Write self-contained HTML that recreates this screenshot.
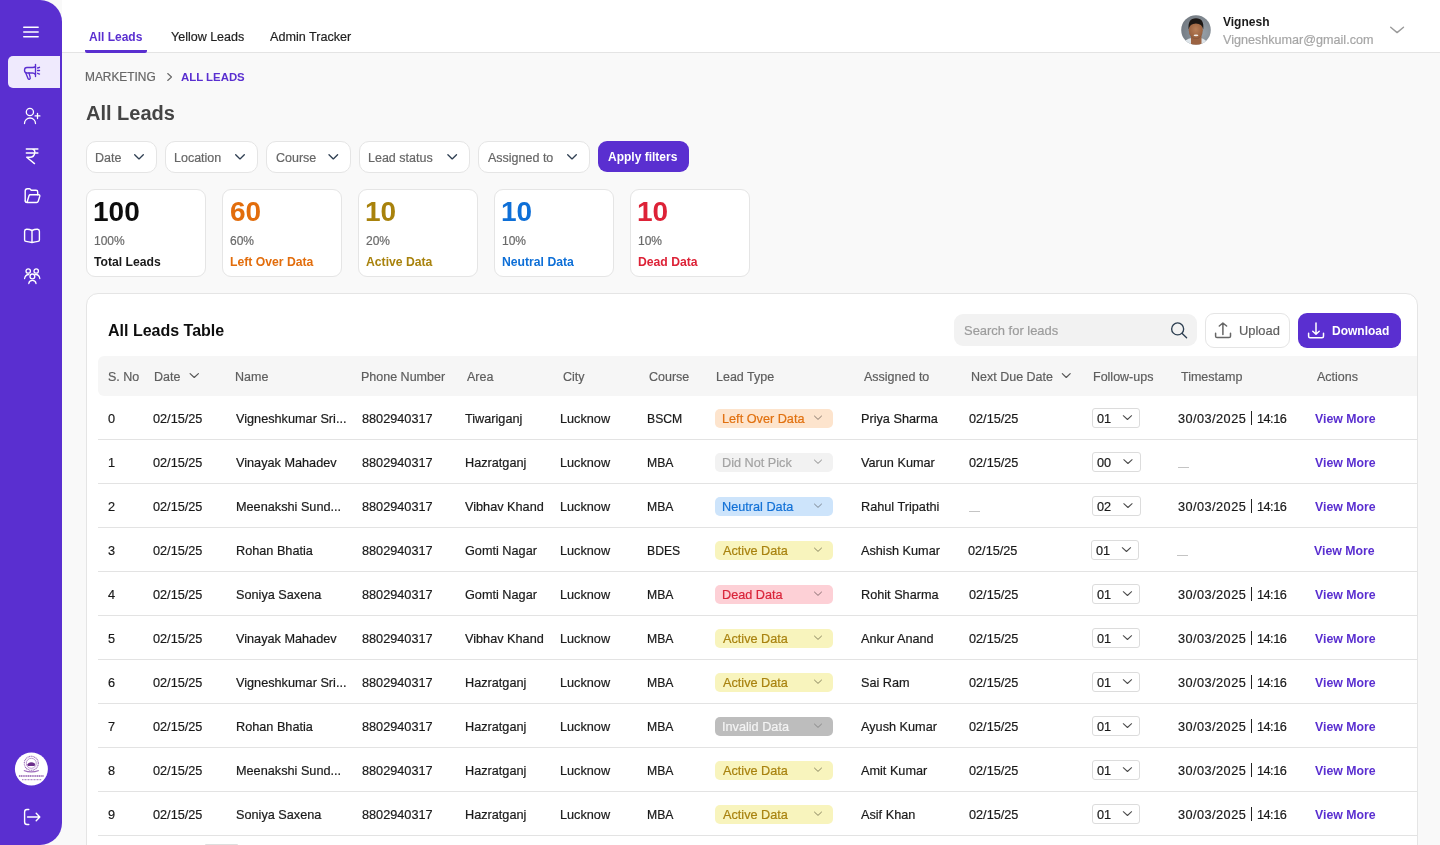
<!DOCTYPE html><html><head><meta charset="utf-8"><style>
*{box-sizing:border-box;margin:0;padding:0}
html,body{width:1440px;height:845px;overflow:hidden;background:#f9f9f9;font-family:"Liberation Sans",sans-serif;color:#1a1a1a}
div{position:absolute;white-space:nowrap;line-height:normal}
svg{position:absolute;overflow:visible}
.t{will-change:transform}
.r{-webkit-text-stroke:0.2px currentColor}
.sb{left:0;top:0;width:62px;height:845px;background:#5a2fd0;border-top-right-radius:22px;border-bottom-right-radius:22px}
.act{left:8px;top:56px;width:52px;height:32px;background:#efeafd;border-radius:5px 0 0 5px}
.hdr{left:62px;top:0;width:1378px;height:53px;background:#fff;border-bottom:1px solid #e4e4e4}
.box{background:#fff;border:1px solid #e5e5e5}
</style></head><body>
<div class="sb"></div><div class="act"></div>
<svg style="left:20px;top:20px" width="24" height="24" viewBox="0 0 24 24" fill="none" stroke="#fff" stroke-width="1.5" stroke-linecap="round" stroke-linejoin="round"><path d="M3.75 7.3H18.15M3.75 12H18.15M3.75 16.8H18.15"/></svg>
<svg style="left:20px;top:60px" width="24" height="24" viewBox="0 0 24 24" fill="none" stroke="#5a2fd0" stroke-width="1.35" stroke-linecap="round" stroke-linejoin="round"><path d="M15.5 4.5V16.5"/><path d="M15.5 6.5C14.5 7.5 13.5 7.5 12.5 7.5H7C5.5 7.5 4.5 8.7 4.5 10.2C4.5 11.7 5.5 13 7 13H12.5C13.5 13 14.5 13.3 15.5 14.5"/><path d="M5.6 12.6L8 18.6C8.3 19.4 9.3 19.5 9.8 19C10.3 18.6 10.4 18 10.2 17.4L9 13"/><path d="M17.6 8L19.5 7.3M17.6 10.5H19.5M17.6 13.3L19.5 14.1"/></svg>
<svg style="left:20px;top:104px" width="24" height="24" viewBox="0 0 24 24" fill="none" stroke="#fff" stroke-width="1.3" stroke-linecap="round" stroke-linejoin="round"><circle cx="9.9" cy="8" r="3.6"/><path d="M4.5 19.5A5.5 5.5 0 0 1 15.5 19.5"/><path d="M15.1 11.9H19.9M17.5 9.3V14.6"/></svg>
<svg style="left:20px;top:144px" width="24" height="24" viewBox="0 0 24 24" fill="none" stroke="#fff" stroke-width="1.4" stroke-linecap="round" stroke-linejoin="round"><path d="M6.3 5H17.9M6.3 9H17.9M12.3 5C14.5 5.5 15.2 7.5 14.8 9C14.3 11.5 12.5 13.3 10 13.3H6.7L14.5 19.6"/></svg>
<svg style="left:20px;top:184px" width="24" height="24" viewBox="0 0 24 24" fill="none" stroke="#fff" stroke-width="1.4" stroke-linecap="round" stroke-linejoin="round"><path d="M5.2 17V7Q5.2 4.8 7.4 4.8H9.3Q10 4.8 10.5 5.4L11.2 6.3H16Q17.7 6.3 17.7 8V10.8"/><path d="M7 18.5H16.6Q17.8 18.5 18.2 17.3L19.8 12.2Q20 10.8 18.8 10.8H10.2Q9.3 10.8 9 11.7L7 18.5Q5.2 18.5 5.2 17"/></svg>
<svg style="left:20px;top:224px" width="24" height="24" viewBox="0 0 24 24" fill="none" stroke="#fff" stroke-width="1.4" stroke-linecap="round" stroke-linejoin="round"><path d="M12 6.5V18.3"/><path d="M12 6.5C10 5.5 8 5.2 6.5 5.3Q4.6 5.5 4.6 7.3V16Q4.6 17.2 6 17.4C8.5 17.8 10.5 18.2 12 18.5C13.5 18.2 15.5 17.8 18 17.4Q19.4 17.2 19.4 16V7.3Q19.4 5.5 17.5 5.3C16 5.2 14 5.5 12 6.5Z"/></svg>
<svg style="left:20px;top:264px" width="24" height="24" viewBox="0 0 24 24" fill="none" stroke="#fff" stroke-width="1.3" stroke-linecap="round" stroke-linejoin="round"><circle cx="8.2" cy="7" r="2.2"/><circle cx="16.2" cy="7" r="2.2"/><circle cx="12.4" cy="12.4" r="2.4"/><path d="M4.6 14.5C5 12 6.5 10.6 8.8 10.5M15.6 10.5C18 10.6 19.5 12 19.8 14.5M8.8 19.5C9 17.6 10.5 16.4 12.4 16.4C14.3 16.4 15.8 17.6 16 19.5"/></svg>
<svg style="left:14px;top:752px" width="34" height="34" viewBox="0 0 34 34"><circle cx="17.4" cy="17" r="16.5" fill="#fff"/><circle cx="17.3" cy="11.3" r="7" fill="none" stroke="#9d6cbb" stroke-width="1.1" stroke-dasharray="1.1 0.6"/><circle cx="17.3" cy="11.3" r="5" fill="none" stroke="#b48fcb" stroke-width="0.9"/><path d="M13.2 12.5 Q16 8.6 21.2 11.8 L20.6 14 H13.8Z" fill="#6b2d8a"/><path d="M9.8 18.4 Q17.3 21.4 24.8 18.4" fill="none" stroke="#9d6cbb" stroke-width="1.1"/><path d="M4.9 24H30" stroke="#8f5aae" stroke-width="1.6" stroke-dasharray="1.3 0.5"/><path d="M8 27.6H27.7" stroke="#b08dc8" stroke-width="1.1" stroke-dasharray="1 0.5"/></svg>
<svg style="left:20px;top:805px" width="24" height="24" viewBox="0 0 24 24" fill="none" stroke="#fff" stroke-width="1.4" stroke-linecap="round" stroke-linejoin="round"><path d="M8.8 4.5H7Q4.6 4.5 4.6 7V17Q4.6 19.5 7 19.5H8.8M7.5 12H19.5M16.2 8.2L19.8 12L16.2 15.8"/></svg>
<div class="hdr"></div>
<div class="t" style="left:89.20px;top:30px;font-size:12px;color:#5a2fd0;font-weight:bold">All Leads</div>
<div style="left:85px;top:50px;width:62px;height:3px;background:#5a2fd0;border-radius:0 0 2px 2px"></div>
<div class="t r" style="left:171.43px;top:30px;font-size:12.5px;color:#1f1f1f">Yellow Leads</div>
<div class="t r" style="left:269.98px;top:30px;font-size:12.6px;color:#1f1f1f">Admin Tracker</div>
<svg style="left:1181px;top:15px" width="30" height="30" viewBox="0 0 30 30"><defs><clipPath id="cp"><circle cx="15" cy="15" r="14.8"/></clipPath><radialGradient id="bgg" cx="0.7" cy="0.6" r="0.8"><stop offset="0" stop-color="#97a0a8"/><stop offset="1" stop-color="#6f767e"/></radialGradient><radialGradient id="fg" cx="0.5" cy="0.45" r="0.6"><stop offset="0" stop-color="#b98058"/><stop offset="0.8" stop-color="#9a6240"/><stop offset="1" stop-color="#6e4530"/></radialGradient></defs><g clip-path="url(#cp)"><rect width="30" height="30" fill="url(#bgg)"/><path d="M1 30 Q4 24 10.5 23 H19.5 Q25 24 28 30Z" fill="#dce3e8"/><rect x="10" y="19" width="10.5" height="11" fill="#9b6342"/><ellipse cx="14.8" cy="15.2" rx="7" ry="8.8" fill="url(#fg)"/><path d="M7.6 14.5 Q6.5 3.2 15 3.2 Q23.5 3.2 22.2 14.5 Q21.2 8.8 14.9 8.6 Q8.6 8.8 7.6 14.5Z" fill="#1c1714"/><ellipse cx="15" cy="20.3" rx="2.4" ry="0.9" fill="#f2eeea"/></g></svg>
<div class="t" style="left:1223.22px;top:15px;font-size:12px;color:#1a1a1a;font-weight:bold">Vignesh</div>
<div class="t r" style="left:1223.24px;top:33px;font-size:12.6px;color:#a6a6a6">Vigneshkumar@gmail.com</div>
<svg style="left:1387px;top:24px" width="18" height="11" viewBox="0 0 18 11" fill="none" stroke="#9a9a9a" stroke-width="1.4" stroke-linecap="round" stroke-linejoin="round"><path d="M3.70 3.20L10.10 8.60L16.50 3.20"/></svg>
<div class="t r" style="left:85.42px;top:70px;font-size:11.9px;color:#666">MARKETING</div>
<svg style="left:167px;top:73px" width="6" height="8" viewBox="0 0 6 8" fill="none" stroke="#666" stroke-width="1.1" stroke-linecap="round" stroke-linejoin="round"><path d="M0.7 0.5L4.5 4L0.7 7.5"/></svg>
<div class="t" style="left:181.02px;top:71px;font-size:11.4px;color:#5a2fd0;font-weight:bold">ALL LEADS</div>
<div class="t" style="left:86.00px;top:102px;font-size:20px;color:#454545;font-weight:bold">All Leads</div>
<div class="box" style="left:86px;top:141px;width:71px;height:32px;border-radius:10px"></div>
<div class="t r" style="left:95.47px;top:151px;font-size:12.5px;color:#666">Date</div>
<svg style="left:131px;top:151px" width="14" height="10" viewBox="0 0 14 10" fill="none" stroke="#2f3f52" stroke-width="1.35" stroke-linecap="round" stroke-linejoin="round"><path d="M3.70 3.75L8.00 7.90L12.30 3.75"/></svg>
<div class="box" style="left:165px;top:141px;width:92.5px;height:32px;border-radius:10px"></div>
<div class="t r" style="left:174.27px;top:151px;font-size:12.5px;color:#666">Location</div>
<svg style="left:232px;top:151px" width="14" height="10" viewBox="0 0 14 10" fill="none" stroke="#2f3f52" stroke-width="1.35" stroke-linecap="round" stroke-linejoin="round"><path d="M3.70 3.75L8.00 7.90L12.30 3.75"/></svg>
<div class="box" style="left:266px;top:141px;width:85px;height:32px;border-radius:10px"></div>
<div class="t r" style="left:275.77px;top:151px;font-size:12.5px;color:#666">Course</div>
<svg style="left:326px;top:151px" width="14" height="10" viewBox="0 0 14 10" fill="none" stroke="#2f3f52" stroke-width="1.35" stroke-linecap="round" stroke-linejoin="round"><path d="M3.00 3.75L7.30 7.90L11.60 3.75"/></svg>
<div class="box" style="left:359px;top:141px;width:111px;height:32px;border-radius:10px"></div>
<div class="t r" style="left:368.37px;top:151px;font-size:12.5px;color:#666">Lead status</div>
<svg style="left:444px;top:151px" width="14" height="10" viewBox="0 0 14 10" fill="none" stroke="#2f3f52" stroke-width="1.35" stroke-linecap="round" stroke-linejoin="round"><path d="M3.90 3.75L8.20 7.90L12.50 3.75"/></svg>
<div class="box" style="left:478px;top:141px;width:111.5px;height:32px;border-radius:10px"></div>
<div class="t r" style="left:488.48px;top:151px;font-size:12.5px;color:#666">Assigned to</div>
<svg style="left:564px;top:151px" width="14" height="10" viewBox="0 0 14 10" fill="none" stroke="#2f3f52" stroke-width="1.35" stroke-linecap="round" stroke-linejoin="round"><path d="M3.70 3.75L8.00 7.90L12.30 3.75"/></svg>
<div style="left:598px;top:141px;width:91px;height:31px;background:#5a2fd0;border-radius:9px"></div>
<div class="t" style="left:608.10px;top:150px;font-size:12px;color:#fff;font-weight:bold">Apply filters</div>
<div class="box" style="left:86px;top:189px;width:120px;height:88px;border-radius:9px"></div>
<div class="t" style="left:92.84px;top:196px;font-size:28px;color:#0d0d0d;font-weight:bold">100</div>
<div class="t r" style="left:93.69px;top:234px;font-size:12px;color:#6a6a6a">100%</div>
<div class="t" style="left:94.36px;top:255px;font-size:12.2px;color:#1a1a1a;font-weight:bold">Total Leads</div>
<div class="box" style="left:222px;top:189px;width:120px;height:88px;border-radius:9px"></div>
<div class="t" style="left:229.57px;top:196px;font-size:28px;color:#e26d0c;font-weight:bold">60</div>
<div class="t r" style="left:229.99px;top:234px;font-size:12px;color:#6a6a6a">60%</div>
<div class="t" style="left:229.68px;top:255px;font-size:12.2px;color:#e26d0c;font-weight:bold">Left Over Data</div>
<div class="box" style="left:358px;top:189px;width:120px;height:88px;border-radius:9px"></div>
<div class="t" style="left:364.84px;top:196px;font-size:28px;color:#a8820c;font-weight:bold">10</div>
<div class="t r" style="left:366.00px;top:234px;font-size:12px;color:#6a6a6a">20%</div>
<div class="t" style="left:366.20px;top:255px;font-size:12.2px;color:#a8820c;font-weight:bold">Active Data</div>
<div class="box" style="left:494px;top:189px;width:120px;height:88px;border-radius:9px"></div>
<div class="t" style="left:500.84px;top:196px;font-size:28px;color:#0e6fd7;font-weight:bold">10</div>
<div class="t r" style="left:501.69px;top:234px;font-size:12px;color:#6a6a6a">10%</div>
<div class="t" style="left:501.68px;top:255px;font-size:12.2px;color:#0e6fd7;font-weight:bold">Neutral Data</div>
<div class="box" style="left:630px;top:189px;width:120px;height:88px;border-radius:9px"></div>
<div class="t" style="left:636.84px;top:196px;font-size:28px;color:#dd2237;font-weight:bold">10</div>
<div class="t r" style="left:637.69px;top:234px;font-size:12px;color:#6a6a6a">10%</div>
<div class="t" style="left:637.68px;top:255px;font-size:12.2px;color:#dd2237;font-weight:bold">Dead Data</div>
<div class="box" style="left:86px;top:293px;width:1332px;height:600px;border-radius:12px"></div>
<div class="t" style="left:108.20px;top:322px;font-size:16px;color:#0d0d0d;font-weight:bold">All Leads Table</div>
<div style="left:954px;top:314px;width:243px;height:32px;background:#f2f2f2;border-radius:9px"></div>
<div class="t r" style="left:963.81px;top:323px;font-size:12.95px;color:#9c9c9c">Search for leads</div>
<svg style="left:1166px;top:318px" width="24" height="24" viewBox="0 0 24 24" fill="none" stroke="#2c3e50" stroke-width="1.35" stroke-linecap="round" stroke-linejoin="round"><circle cx="11.65" cy="10.9" r="6"/><path d="M16.2 15.5L20.6 19.7"/></svg>
<div class="box" style="left:1205px;top:313px;width:85px;height:35px;border-radius:9px"></div>
<svg style="left:1211px;top:318px" width="24" height="24" viewBox="0 0 24 24" fill="none" stroke="#666" stroke-width="1.5" stroke-linecap="round" stroke-linejoin="round"><path d="M4.6 15.2V18.2Q4.6 19.6 6 19.6H18Q19.5 19.6 19.5 18.2V15.2M11.9 5.5V16.5M8.3 8L11.9 5L15.6 8"/></svg>
<div class="t r" style="left:1238.70px;top:323px;font-size:12.9px;color:#5f5f5f">Upload</div>
<div style="left:1298px;top:313px;width:103px;height:35px;background:#5a2fd0;border-radius:9px"></div>
<svg style="left:1304px;top:318px" width="24" height="24" viewBox="0 0 24 24" fill="none" stroke="#fff" stroke-width="1.5" stroke-linecap="round" stroke-linejoin="round"><path d="M4.6 15.2V18.2Q4.6 19.7 6 19.7H18Q19.5 19.7 19.5 18.2V15.2M12 5V16M8.8 13.2L12 16.3L15.2 13.2"/></svg>
<div class="t" style="left:1331.60px;top:324px;font-size:12px;color:#fff;font-weight:bold">Download</div>
<div style="left:98px;top:356px;width:1319px;height:40px;background:#f6f6f6;border-radius:6px 0 0 6px"></div>
<div class="t r" style="left:107.68px;top:370px;font-size:12.5px;color:#5e5e5e">S. No</div>
<div class="t r" style="left:154.47px;top:370px;font-size:12.5px;color:#5e5e5e">Date</div>
<div class="t r" style="left:235.22px;top:370px;font-size:12.5px;color:#5e5e5e">Name</div>
<div class="t r" style="left:360.97px;top:370px;font-size:12.5px;color:#5e5e5e">Phone Number</div>
<div class="t r" style="left:467.48px;top:370px;font-size:12.5px;color:#5e5e5e">Area</div>
<div class="t r" style="left:562.62px;top:370px;font-size:12.5px;color:#5e5e5e">City</div>
<div class="t r" style="left:648.62px;top:370px;font-size:12.5px;color:#5e5e5e">Course</div>
<div class="t r" style="left:716.47px;top:370px;font-size:12.5px;color:#5e5e5e">Lead Type</div>
<div class="t r" style="left:863.73px;top:370px;font-size:12.5px;color:#5e5e5e">Assigned to</div>
<div class="t r" style="left:970.72px;top:370px;font-size:12.5px;color:#5e5e5e">Next Due Date</div>
<div class="t r" style="left:1093.47px;top:370px;font-size:12.5px;color:#5e5e5e">Follow-ups</div>
<div class="t r" style="left:1180.62px;top:370px;font-size:12.5px;color:#5e5e5e">Timestamp</div>
<div class="t r" style="left:1316.58px;top:370px;font-size:12.5px;color:#5e5e5e">Actions</div>
<svg style="left:187px;top:370px" width="14" height="9" viewBox="0 0 14 9" fill="none" stroke="#555" stroke-width="1.15" stroke-linecap="round" stroke-linejoin="round"><path d="M3.10 3.60L7.25 7.50L11.40 3.60"/></svg>
<svg style="left:1059px;top:370px" width="13" height="9" viewBox="0 0 13 9" fill="none" stroke="#555" stroke-width="1.15" stroke-linecap="round" stroke-linejoin="round"><path d="M3.30 3.60L7.25 7.50L11.20 3.60"/></svg>
<div style="left:98px;top:439px;width:1319px;height:1px;background:#e3e3e3"></div>
<div class="t r" style="left:108.25px;top:412px;font-size:12.7px;">0</div>
<div class="t r" style="left:152.75px;top:412px;font-size:12.7px;">02/15/25</div>
<div class="t r" style="left:236.19px;top:412px;font-size:12.7px;">Vigneshkumar Sri...</div>
<div class="t r" style="left:361.95px;top:412px;font-size:12.7px;">8802940317</div>
<div class="t r" style="left:465.46px;top:412px;font-size:12.7px;">Tiwariganj</div>
<div class="t r" style="left:560.21px;top:412px;font-size:12.7px;">Lucknow</div>
<div class="t r" style="left:646.50px;top:412px;font-size:12.191999999999998px;">BSCM</div>
<div style="left:715px;top:408.5px;width:118px;height:19px;background:#fde4cd;border-radius:5px"></div>
<div class="t r" style="left:722.36px;top:412px;font-size:12.7px;color:#e0700f">Left Over Data</div>
<svg style="left:811px;top:413px" width="13" height="9" viewBox="0 0 13 9" fill="none" stroke="#8a7a6e" stroke-width="1.0" stroke-linecap="round" stroke-linejoin="round"><path d="M3.50 3.10L7.00 6.40L10.50 3.10"/></svg>
<div class="t r" style="left:860.71px;top:412px;font-size:12.7px;">Priya Sharma</div>
<div class="t r" style="left:969.00px;top:412px;font-size:12.7px;">02/15/25</div>
<div class="box" style="left:1092.4px;top:408.3px;width:48px;height:19.5px;border-radius:3px;border-color:#dcdcdc"></div>
<div class="t r" style="left:1096.80px;top:412px;font-size:12.7px;">01</div>
<svg style="left:1120px;top:412px" width="14" height="9" viewBox="0 0 14 9" fill="none" stroke="#4a4a4a" stroke-width="1.05" stroke-linecap="round" stroke-linejoin="round"><path d="M3.30 3.70L7.45 7.50L11.60 3.70"/></svg>
<div class="t r" style="left:1178.22px;top:412px;font-size:12.7px;letter-spacing:0.47px">30/03/2025</div>
<div style="left:1250.7px;top:411px;width:1.1px;height:14px;background:#222"></div>
<div class="t r" style="left:1256.63px;top:412px;font-size:12.7px;letter-spacing:-0.5px">14:16</div>
<div class="t" style="left:1314.67px;top:412px;font-size:12.3px;color:#5a2fd0;font-weight:bold">View More</div>
<div style="left:98px;top:483px;width:1319px;height:1px;background:#e3e3e3"></div>
<div class="t r" style="left:108.25px;top:456px;font-size:12.7px;">1</div>
<div class="t r" style="left:152.75px;top:456px;font-size:12.7px;">02/15/25</div>
<div class="t r" style="left:236.19px;top:456px;font-size:12.7px;">Vinayak Mahadev</div>
<div class="t r" style="left:361.95px;top:456px;font-size:12.7px;">8802940317</div>
<div class="t r" style="left:465.46px;top:456px;font-size:12.7px;">Hazratganj</div>
<div class="t r" style="left:560.21px;top:456px;font-size:12.7px;">Lucknow</div>
<div class="t r" style="left:646.50px;top:456px;font-size:12.191999999999998px;">MBA</div>
<div style="left:715px;top:452.5px;width:118px;height:19px;background:#f2f2f2;border-radius:5px"></div>
<div class="t r" style="left:722.36px;top:456px;font-size:12.7px;color:#a3a3a3">Did Not Pick</div>
<svg style="left:811px;top:457px" width="13" height="9" viewBox="0 0 13 9" fill="none" stroke="#888" stroke-width="1.0" stroke-linecap="round" stroke-linejoin="round"><path d="M3.50 3.10L7.00 6.40L10.50 3.10"/></svg>
<div class="t r" style="left:860.71px;top:456px;font-size:12.7px;">Varun Kumar</div>
<div class="t r" style="left:969.00px;top:456px;font-size:12.7px;">02/15/25</div>
<div class="box" style="left:1092.4px;top:452.3px;width:49px;height:19.5px;border-radius:3px;border-color:#dcdcdc"></div>
<div class="t r" style="left:1096.80px;top:456px;font-size:12.7px;">00</div>
<svg style="left:1120px;top:456px" width="14" height="9" viewBox="0 0 14 9" fill="none" stroke="#4a4a4a" stroke-width="1.05" stroke-linecap="round" stroke-linejoin="round"><path d="M3.80 3.70L7.95 7.50L12.10 3.70"/></svg>
<div style="left:1178px;top:466.5px;width:11px;height:1.5px;background:#c4c4c4"></div>
<div class="t" style="left:1314.67px;top:456px;font-size:12.3px;color:#5a2fd0;font-weight:bold">View More</div>
<div style="left:98px;top:527px;width:1319px;height:1px;background:#e3e3e3"></div>
<div class="t r" style="left:108.25px;top:500px;font-size:12.7px;">2</div>
<div class="t r" style="left:152.75px;top:500px;font-size:12.7px;">02/15/25</div>
<div class="t r" style="left:236.19px;top:500px;font-size:12.7px;">Meenakshi Sund...</div>
<div class="t r" style="left:361.95px;top:500px;font-size:12.7px;">8802940317</div>
<div class="t r" style="left:465.46px;top:500px;font-size:12.7px;">Vibhav Khand</div>
<div class="t r" style="left:560.21px;top:500px;font-size:12.7px;">Lucknow</div>
<div class="t r" style="left:646.50px;top:500px;font-size:12.191999999999998px;">MBA</div>
<div style="left:715px;top:496.5px;width:118px;height:19px;background:#cde4fb;border-radius:5px"></div>
<div class="t r" style="left:722.36px;top:500px;font-size:12.7px;color:#1170d6">Neutral Data</div>
<svg style="left:811px;top:501px" width="13" height="9" viewBox="0 0 13 9" fill="none" stroke="#7b8590" stroke-width="1.0" stroke-linecap="round" stroke-linejoin="round"><path d="M3.50 3.10L7.00 6.40L10.50 3.10"/></svg>
<div class="t r" style="left:860.71px;top:500px;font-size:12.7px;">Rahul Tripathi</div>
<div style="left:969px;top:510.5px;width:11px;height:1.5px;background:#c4c4c4"></div>
<div class="box" style="left:1092.4px;top:496.3px;width:49px;height:19.5px;border-radius:3px;border-color:#dcdcdc"></div>
<div class="t r" style="left:1096.80px;top:500px;font-size:12.7px;">02</div>
<svg style="left:1120px;top:500px" width="14" height="9" viewBox="0 0 14 9" fill="none" stroke="#4a4a4a" stroke-width="1.05" stroke-linecap="round" stroke-linejoin="round"><path d="M3.80 3.70L7.95 7.50L12.10 3.70"/></svg>
<div class="t r" style="left:1178.22px;top:500px;font-size:12.7px;letter-spacing:0.47px">30/03/2025</div>
<div style="left:1250.7px;top:499px;width:1.1px;height:14px;background:#222"></div>
<div class="t r" style="left:1256.63px;top:500px;font-size:12.7px;letter-spacing:-0.5px">14:16</div>
<div class="t" style="left:1314.67px;top:500px;font-size:12.3px;color:#5a2fd0;font-weight:bold">View More</div>
<div style="left:98px;top:571px;width:1319px;height:1px;background:#e3e3e3"></div>
<div class="t r" style="left:108.25px;top:544px;font-size:12.7px;">3</div>
<div class="t r" style="left:152.75px;top:544px;font-size:12.7px;">02/15/25</div>
<div class="t r" style="left:236.19px;top:544px;font-size:12.7px;">Rohan Bhatia</div>
<div class="t r" style="left:361.95px;top:544px;font-size:12.7px;">8802940317</div>
<div class="t r" style="left:465.46px;top:544px;font-size:12.7px;">Gomti Nagar</div>
<div class="t r" style="left:560.21px;top:544px;font-size:12.7px;">Lucknow</div>
<div class="t r" style="left:646.50px;top:544px;font-size:12.191999999999998px;">BDES</div>
<div style="left:715px;top:540.5px;width:118px;height:19px;background:#f8f4bd;border-radius:5px"></div>
<div class="t r" style="left:723.38px;top:544px;font-size:12.7px;color:#a8820f">Active Data</div>
<svg style="left:811px;top:545px" width="13" height="9" viewBox="0 0 13 9" fill="none" stroke="#8a8660" stroke-width="1.0" stroke-linecap="round" stroke-linejoin="round"><path d="M3.50 3.10L7.00 6.40L10.50 3.10"/></svg>
<div class="t r" style="left:860.71px;top:544px;font-size:12.7px;">Ashish Kumar</div>
<div class="t r" style="left:968.00px;top:544px;font-size:12.7px;">02/15/25</div>
<div class="box" style="left:1091.4px;top:540.3px;width:48px;height:19.5px;border-radius:3px;border-color:#dcdcdc"></div>
<div class="t r" style="left:1095.80px;top:544px;font-size:12.7px;">01</div>
<svg style="left:1119px;top:544px" width="14" height="9" viewBox="0 0 14 9" fill="none" stroke="#4a4a4a" stroke-width="1.05" stroke-linecap="round" stroke-linejoin="round"><path d="M3.30 3.70L7.45 7.50L11.60 3.70"/></svg>
<div style="left:1177px;top:554.5px;width:11px;height:1.5px;background:#c4c4c4"></div>
<div class="t" style="left:1313.67px;top:544px;font-size:12.3px;color:#5a2fd0;font-weight:bold">View More</div>
<div style="left:98px;top:615px;width:1319px;height:1px;background:#e3e3e3"></div>
<div class="t r" style="left:108.25px;top:588px;font-size:12.7px;">4</div>
<div class="t r" style="left:152.75px;top:588px;font-size:12.7px;">02/15/25</div>
<div class="t r" style="left:236.19px;top:588px;font-size:12.7px;">Soniya Saxena</div>
<div class="t r" style="left:361.95px;top:588px;font-size:12.7px;">8802940317</div>
<div class="t r" style="left:465.46px;top:588px;font-size:12.7px;">Gomti Nagar</div>
<div class="t r" style="left:560.21px;top:588px;font-size:12.7px;">Lucknow</div>
<div class="t r" style="left:646.50px;top:588px;font-size:12.191999999999998px;">MBA</div>
<div style="left:715px;top:584.5px;width:118px;height:19px;background:#fdd0d6;border-radius:5px"></div>
<div class="t r" style="left:722.36px;top:588px;font-size:12.7px;color:#d92339">Dead Data</div>
<svg style="left:811px;top:589px" width="13" height="9" viewBox="0 0 13 9" fill="none" stroke="#8a6e72" stroke-width="1.0" stroke-linecap="round" stroke-linejoin="round"><path d="M3.50 3.10L7.00 6.40L10.50 3.10"/></svg>
<div class="t r" style="left:860.71px;top:588px;font-size:12.7px;">Rohit Sharma</div>
<div class="t r" style="left:969.00px;top:588px;font-size:12.7px;">02/15/25</div>
<div class="box" style="left:1092.4px;top:584.3px;width:48px;height:19.5px;border-radius:3px;border-color:#dcdcdc"></div>
<div class="t r" style="left:1096.80px;top:588px;font-size:12.7px;">01</div>
<svg style="left:1120px;top:588px" width="14" height="9" viewBox="0 0 14 9" fill="none" stroke="#4a4a4a" stroke-width="1.05" stroke-linecap="round" stroke-linejoin="round"><path d="M3.30 3.70L7.45 7.50L11.60 3.70"/></svg>
<div class="t r" style="left:1178.22px;top:588px;font-size:12.7px;letter-spacing:0.47px">30/03/2025</div>
<div style="left:1250.7px;top:587px;width:1.1px;height:14px;background:#222"></div>
<div class="t r" style="left:1256.63px;top:588px;font-size:12.7px;letter-spacing:-0.5px">14:16</div>
<div class="t" style="left:1314.67px;top:588px;font-size:12.3px;color:#5a2fd0;font-weight:bold">View More</div>
<div style="left:98px;top:659px;width:1319px;height:1px;background:#e3e3e3"></div>
<div class="t r" style="left:108.25px;top:632px;font-size:12.7px;">5</div>
<div class="t r" style="left:152.75px;top:632px;font-size:12.7px;">02/15/25</div>
<div class="t r" style="left:236.19px;top:632px;font-size:12.7px;">Vinayak Mahadev</div>
<div class="t r" style="left:361.95px;top:632px;font-size:12.7px;">8802940317</div>
<div class="t r" style="left:465.46px;top:632px;font-size:12.7px;">Vibhav Khand</div>
<div class="t r" style="left:560.21px;top:632px;font-size:12.7px;">Lucknow</div>
<div class="t r" style="left:646.50px;top:632px;font-size:12.191999999999998px;">MBA</div>
<div style="left:715px;top:628.5px;width:118px;height:19px;background:#f8f4bd;border-radius:5px"></div>
<div class="t r" style="left:723.38px;top:632px;font-size:12.7px;color:#a8820f">Active Data</div>
<svg style="left:811px;top:633px" width="13" height="9" viewBox="0 0 13 9" fill="none" stroke="#8a8660" stroke-width="1.0" stroke-linecap="round" stroke-linejoin="round"><path d="M3.50 3.10L7.00 6.40L10.50 3.10"/></svg>
<div class="t r" style="left:860.71px;top:632px;font-size:12.7px;">Ankur Anand</div>
<div class="t r" style="left:969.00px;top:632px;font-size:12.7px;">02/15/25</div>
<div class="box" style="left:1092.4px;top:628.3px;width:48px;height:19.5px;border-radius:3px;border-color:#dcdcdc"></div>
<div class="t r" style="left:1096.80px;top:632px;font-size:12.7px;">01</div>
<svg style="left:1120px;top:632px" width="14" height="9" viewBox="0 0 14 9" fill="none" stroke="#4a4a4a" stroke-width="1.05" stroke-linecap="round" stroke-linejoin="round"><path d="M3.30 3.70L7.45 7.50L11.60 3.70"/></svg>
<div class="t r" style="left:1178.22px;top:632px;font-size:12.7px;letter-spacing:0.47px">30/03/2025</div>
<div style="left:1250.7px;top:631px;width:1.1px;height:14px;background:#222"></div>
<div class="t r" style="left:1256.63px;top:632px;font-size:12.7px;letter-spacing:-0.5px">14:16</div>
<div class="t" style="left:1314.67px;top:632px;font-size:12.3px;color:#5a2fd0;font-weight:bold">View More</div>
<div style="left:98px;top:703px;width:1319px;height:1px;background:#e3e3e3"></div>
<div class="t r" style="left:108.25px;top:676px;font-size:12.7px;">6</div>
<div class="t r" style="left:152.75px;top:676px;font-size:12.7px;">02/15/25</div>
<div class="t r" style="left:236.19px;top:676px;font-size:12.7px;">Vigneshkumar Sri...</div>
<div class="t r" style="left:361.95px;top:676px;font-size:12.7px;">8802940317</div>
<div class="t r" style="left:465.46px;top:676px;font-size:12.7px;">Hazratganj</div>
<div class="t r" style="left:560.21px;top:676px;font-size:12.7px;">Lucknow</div>
<div class="t r" style="left:646.50px;top:676px;font-size:12.191999999999998px;">MBA</div>
<div style="left:715px;top:672.5px;width:118px;height:19px;background:#f8f4bd;border-radius:5px"></div>
<div class="t r" style="left:723.38px;top:676px;font-size:12.7px;color:#a8820f">Active Data</div>
<svg style="left:811px;top:677px" width="13" height="9" viewBox="0 0 13 9" fill="none" stroke="#8a8660" stroke-width="1.0" stroke-linecap="round" stroke-linejoin="round"><path d="M3.50 3.10L7.00 6.40L10.50 3.10"/></svg>
<div class="t r" style="left:860.71px;top:676px;font-size:12.7px;">Sai Ram</div>
<div class="t r" style="left:969.00px;top:676px;font-size:12.7px;">02/15/25</div>
<div class="box" style="left:1092.4px;top:672.3px;width:48px;height:19.5px;border-radius:3px;border-color:#dcdcdc"></div>
<div class="t r" style="left:1096.80px;top:676px;font-size:12.7px;">01</div>
<svg style="left:1120px;top:676px" width="14" height="9" viewBox="0 0 14 9" fill="none" stroke="#4a4a4a" stroke-width="1.05" stroke-linecap="round" stroke-linejoin="round"><path d="M3.30 3.70L7.45 7.50L11.60 3.70"/></svg>
<div class="t r" style="left:1178.22px;top:676px;font-size:12.7px;letter-spacing:0.47px">30/03/2025</div>
<div style="left:1250.7px;top:675px;width:1.1px;height:14px;background:#222"></div>
<div class="t r" style="left:1256.63px;top:676px;font-size:12.7px;letter-spacing:-0.5px">14:16</div>
<div class="t" style="left:1314.67px;top:676px;font-size:12.3px;color:#5a2fd0;font-weight:bold">View More</div>
<div style="left:98px;top:747px;width:1319px;height:1px;background:#e3e3e3"></div>
<div class="t r" style="left:108.25px;top:720px;font-size:12.7px;">7</div>
<div class="t r" style="left:152.75px;top:720px;font-size:12.7px;">02/15/25</div>
<div class="t r" style="left:236.19px;top:720px;font-size:12.7px;">Rohan Bhatia</div>
<div class="t r" style="left:361.95px;top:720px;font-size:12.7px;">8802940317</div>
<div class="t r" style="left:465.46px;top:720px;font-size:12.7px;">Hazratganj</div>
<div class="t r" style="left:560.21px;top:720px;font-size:12.7px;">Lucknow</div>
<div class="t r" style="left:646.50px;top:720px;font-size:12.191999999999998px;">MBA</div>
<div style="left:715px;top:716.5px;width:118px;height:19px;background:#bdbdbd;border-radius:5px"></div>
<div class="t r" style="left:722.23px;top:720px;font-size:12.7px;color:#f4f4f4">Invalid Data</div>
<svg style="left:811px;top:721px" width="13" height="9" viewBox="0 0 13 9" fill="none" stroke="#888" stroke-width="1.0" stroke-linecap="round" stroke-linejoin="round"><path d="M3.50 3.10L7.00 6.40L10.50 3.10"/></svg>
<div class="t r" style="left:860.71px;top:720px;font-size:12.7px;">Ayush Kumar</div>
<div class="t r" style="left:969.00px;top:720px;font-size:12.7px;">02/15/25</div>
<div class="box" style="left:1092.4px;top:716.3px;width:48px;height:19.5px;border-radius:3px;border-color:#dcdcdc"></div>
<div class="t r" style="left:1096.80px;top:720px;font-size:12.7px;">01</div>
<svg style="left:1120px;top:720px" width="14" height="9" viewBox="0 0 14 9" fill="none" stroke="#4a4a4a" stroke-width="1.05" stroke-linecap="round" stroke-linejoin="round"><path d="M3.30 3.70L7.45 7.50L11.60 3.70"/></svg>
<div class="t r" style="left:1178.22px;top:720px;font-size:12.7px;letter-spacing:0.47px">30/03/2025</div>
<div style="left:1250.7px;top:719px;width:1.1px;height:14px;background:#222"></div>
<div class="t r" style="left:1256.63px;top:720px;font-size:12.7px;letter-spacing:-0.5px">14:16</div>
<div class="t" style="left:1314.67px;top:720px;font-size:12.3px;color:#5a2fd0;font-weight:bold">View More</div>
<div style="left:98px;top:791px;width:1319px;height:1px;background:#e3e3e3"></div>
<div class="t r" style="left:108.25px;top:764px;font-size:12.7px;">8</div>
<div class="t r" style="left:152.75px;top:764px;font-size:12.7px;">02/15/25</div>
<div class="t r" style="left:236.19px;top:764px;font-size:12.7px;">Meenakshi Sund...</div>
<div class="t r" style="left:361.95px;top:764px;font-size:12.7px;">8802940317</div>
<div class="t r" style="left:465.46px;top:764px;font-size:12.7px;">Hazratganj</div>
<div class="t r" style="left:560.21px;top:764px;font-size:12.7px;">Lucknow</div>
<div class="t r" style="left:646.50px;top:764px;font-size:12.191999999999998px;">MBA</div>
<div style="left:715px;top:760.5px;width:118px;height:19px;background:#f8f4bd;border-radius:5px"></div>
<div class="t r" style="left:723.38px;top:764px;font-size:12.7px;color:#a8820f">Active Data</div>
<svg style="left:811px;top:765px" width="13" height="9" viewBox="0 0 13 9" fill="none" stroke="#8a8660" stroke-width="1.0" stroke-linecap="round" stroke-linejoin="round"><path d="M3.50 3.10L7.00 6.40L10.50 3.10"/></svg>
<div class="t r" style="left:860.71px;top:764px;font-size:12.7px;">Amit Kumar</div>
<div class="t r" style="left:969.00px;top:764px;font-size:12.7px;">02/15/25</div>
<div class="box" style="left:1092.4px;top:760.3px;width:48px;height:19.5px;border-radius:3px;border-color:#dcdcdc"></div>
<div class="t r" style="left:1096.80px;top:764px;font-size:12.7px;">01</div>
<svg style="left:1120px;top:764px" width="14" height="9" viewBox="0 0 14 9" fill="none" stroke="#4a4a4a" stroke-width="1.05" stroke-linecap="round" stroke-linejoin="round"><path d="M3.30 3.70L7.45 7.50L11.60 3.70"/></svg>
<div class="t r" style="left:1178.22px;top:764px;font-size:12.7px;letter-spacing:0.47px">30/03/2025</div>
<div style="left:1250.7px;top:763px;width:1.1px;height:14px;background:#222"></div>
<div class="t r" style="left:1256.63px;top:764px;font-size:12.7px;letter-spacing:-0.5px">14:16</div>
<div class="t" style="left:1314.67px;top:764px;font-size:12.3px;color:#5a2fd0;font-weight:bold">View More</div>
<div style="left:98px;top:835px;width:1319px;height:1px;background:#e3e3e3"></div>
<div class="t r" style="left:108.25px;top:808px;font-size:12.7px;">9</div>
<div class="t r" style="left:152.75px;top:808px;font-size:12.7px;">02/15/25</div>
<div class="t r" style="left:236.19px;top:808px;font-size:12.7px;">Soniya Saxena</div>
<div class="t r" style="left:361.95px;top:808px;font-size:12.7px;">8802940317</div>
<div class="t r" style="left:465.46px;top:808px;font-size:12.7px;">Hazratganj</div>
<div class="t r" style="left:560.21px;top:808px;font-size:12.7px;">Lucknow</div>
<div class="t r" style="left:646.50px;top:808px;font-size:12.191999999999998px;">MBA</div>
<div style="left:715px;top:804.5px;width:118px;height:19px;background:#f8f4bd;border-radius:5px"></div>
<div class="t r" style="left:723.38px;top:808px;font-size:12.7px;color:#a8820f">Active Data</div>
<svg style="left:811px;top:809px" width="13" height="9" viewBox="0 0 13 9" fill="none" stroke="#8a8660" stroke-width="1.0" stroke-linecap="round" stroke-linejoin="round"><path d="M3.50 3.10L7.00 6.40L10.50 3.10"/></svg>
<div class="t r" style="left:860.71px;top:808px;font-size:12.7px;">Asif Khan</div>
<div class="t r" style="left:969.00px;top:808px;font-size:12.7px;">02/15/25</div>
<div class="box" style="left:1092.4px;top:804.3px;width:48px;height:19.5px;border-radius:3px;border-color:#dcdcdc"></div>
<div class="t r" style="left:1096.80px;top:808px;font-size:12.7px;">01</div>
<svg style="left:1120px;top:808px" width="14" height="9" viewBox="0 0 14 9" fill="none" stroke="#4a4a4a" stroke-width="1.05" stroke-linecap="round" stroke-linejoin="round"><path d="M3.30 3.70L7.45 7.50L11.60 3.70"/></svg>
<div class="t r" style="left:1178.22px;top:808px;font-size:12.7px;letter-spacing:0.47px">30/03/2025</div>
<div style="left:1250.7px;top:807px;width:1.1px;height:14px;background:#222"></div>
<div class="t r" style="left:1256.63px;top:808px;font-size:12.7px;letter-spacing:-0.5px">14:16</div>
<div class="t" style="left:1314.67px;top:808px;font-size:12.3px;color:#5a2fd0;font-weight:bold">View More</div>
<div style="left:205px;top:844px;width:33px;height:2px;background:#dedede;border-radius:2px"></div>
</body></html>
